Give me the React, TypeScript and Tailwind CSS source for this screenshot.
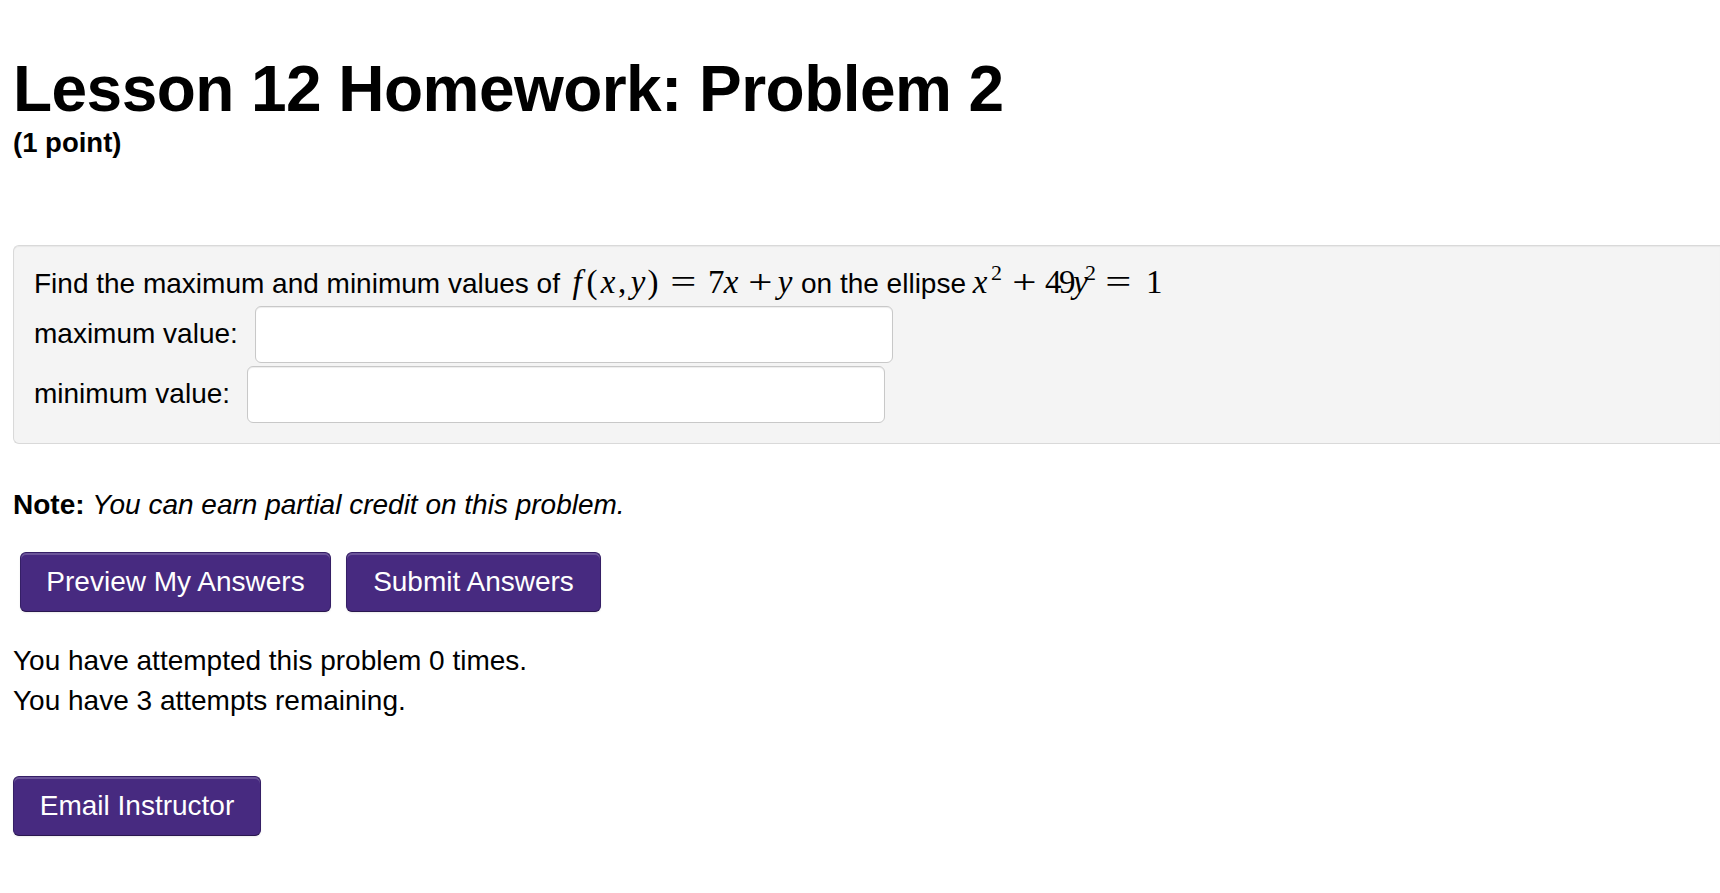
import React from 'react'

const font = { fontFamily: '"Liberation Sans", Arial, Helvetica, sans-serif' }
const serif = { fontFamily: '"Liberation Serif", "Times New Roman", serif' }

// [glyph, box width, italic, margin-left, kind]
type G = [string, number, boolean?, number?, ('op' | 'sup')?]

const lhs: G[] = [
  ['f', 18, true],
  ['(', 12],
  ['x', 20, true],
  [',', 8],
  ['y', 18, true, 3],
  [')', 12],
  ['=', 25, false, 12, 'op'],
  ['7', 14, false, 12],
  ['x', 18, true],
  ['+', 23, false, 9, 'op'],
  ['y', 18, true, 4],
]

const ellipse: G[] = [
  ['x', 18, true],
  ['2', 10, false, 2, 'sup'],
  ['+', 23, false, 12, 'op'],
  ['4', 14, false, 9],
  ['9', 14],
  ['y', 15, true, 0],
  ['2', 10, false, -3, 'sup'],
  ['=', 24, false, 11, 'op'],
  ['1', 12, false, 16],
]

export default function App() {
  return (
    <div
      className="min-h-[893px] w-full overflow-hidden bg-white pl-[13px] text-black"
      style={font}
    >
      <h1 className="mt-[54px] text-[64px] font-bold leading-[70px] tracking-[-0.55px]">
        Lesson 12 Homework: Problem 2
      </h1>
      <div className="mt-[4px] text-[27.5px] font-bold leading-[30px]">
        (1 point)
      </div>

      <ProblemBox />

      <p className="mt-[41px] text-[28px] leading-[40px]">
        <b>Note:</b> <i>You can earn partial credit on this problem.</i>
      </p>

      <div className="mt-[27px] ml-[7px] flex gap-[15px]">
        <PurpleButton className="w-[311px]">Preview My Answers</PurpleButton>
        <PurpleButton className="w-[255px]">Submit Answers</PurpleButton>
      </div>

      <div className="mt-[29px] text-[28px] leading-[40px]">
        <div>You have attempted this problem 0 times.</div>
        <div>You have 3 attempts remaining.</div>
      </div>

      <div className="mt-[55px]">
        <PurpleButton className="w-[248px]">Email Instructor</PurpleButton>
      </div>
    </div>
  )
}

function ProblemBox() {
  return (
    <div className="mt-[87px] rounded-l-[6px] border border-r-0 border-[#d9d9d9] bg-[#f4f4f4] pt-[18px] pb-[19px] pl-[20px] shadow-[inset_0_1px_1px_rgba(0,0,0,0.05)]">
      <div className="h-[40px] text-[28px] leading-[40px] whitespace-nowrap">
        <span>Find the maximum and minimum values of</span>
        <span className="ml-[8px]">
          <MathRow glyphs={lhs} />
        </span>
        <span className="ml-[7px] mr-[5px]">on the ellipse</span>
        <MathRow glyphs={ellipse} />
      </div>
      <AnswerRow label="maximum value:" />
      <AnswerRow label="minimum value:" />
    </div>
  )
}

function MathRow({ glyphs }: { glyphs: G[] }) {
  return (
    <span className="text-[33px] leading-none" style={serif}>
      {glyphs.map(([ch, w, italic, ml = 0, kind], i) => (
        <span
          key={i}
          className={`inline-block text-center ${italic ? 'italic' : ''} ${
            kind === 'sup' ? 'relative -top-[13px] text-[22px]' : ''
          }`}
          style={{ width: w, marginLeft: ml }}
        >
          {kind === 'op' ? (
            <span className={`inline-block ${ch === '=' ? 'scale-x-[1.4]' : 'scale-x-[1.3]'}`}>
              {ch}
            </span>
          ) : (
            ch
          )}
        </span>
      ))}
    </span>
  )
}

function AnswerRow({ label }: { label: string }) {
  return (
    <div className="flex h-[60px] items-center text-[28px] leading-[40px]">
      <span>{label}</span>
      <input
        type="text"
        className="ml-[17px] h-[57px] w-[638px] rounded-[6px] border border-[#c8c8c8] bg-white px-3 shadow-[inset_0_1px_1px_rgba(0,0,0,0.075)] outline-none"
      />
    </div>
  )
}

function PurpleButton({
  children,
  className = '',
}: {
  children: React.ReactNode
  className?: string
}) {
  return (
    <button
      type="button"
      className={`flex h-[60px] items-center justify-center rounded-[6px] border border-[#351f66] border-b-[#2a174f] bg-[#472a80] text-[28px] leading-[40px] text-white shadow-[inset_0_2px_0_rgba(255,255,255,0.2),0_1px_2px_rgba(0,0,0,0.08)] ${className}`}
      style={font}
    >
      {children}
    </button>
  )
}
